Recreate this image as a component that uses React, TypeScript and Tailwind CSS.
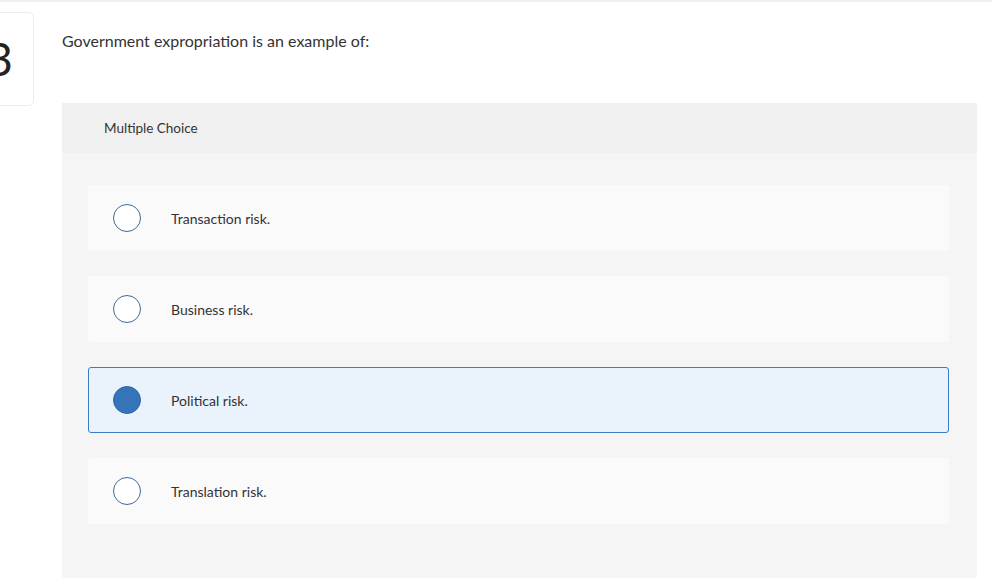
const options = [
  { label: "Transaction risk.", selected: false },
  { label: "Business risk.", selected: false },
  { label: "Political risk.", selected: true },
  { label: "Translation risk.", selected: false },
];

function Radio({ checked }: { checked: boolean }) {
  return (
    <span
      className={`block w-[28px] h-[28px] rounded-full border-[1.5px] ${
        checked ? "bg-[#3574b8] border-[#2e67a4]" : "bg-white border-[#3d6a98]"
      }`}
    />
  );
}

export default function App() {
  return (
    <div className="w-[992px] h-[588px] bg-white border-t-2 border-[#f0f0f0] overflow-hidden font-['Lato','Open_Sans',sans-serif] text-[#333]">
      <div className="flex">
        <div className="relative w-[34px] shrink-0 pt-[10px]">
          <div className="h-[94px] w-[60px] ml-[-26px] border border-[#ececec] rounded-[5px] flex items-center justify-end pr-[20px] overflow-hidden">
            <span className="text-[46px] leading-none text-[#222]">3</span>
          </div>
        </div>
        <div className="ml-[28px] w-[915px]">
          <p className="pt-[29px] text-[16px] leading-[20px]">Government expropriation is an example of:</p>
          <div className="mt-[52px] h-[475px] bg-[#f5f5f5] rounded-b-[3px]">
            <div className="h-[50px] bg-[#f0f0f0] flex items-center pl-[42px] pt-[1px] text-[13.5px]">
              Multiple Choice
            </div>
            <div className="flex flex-col gap-[25px] pt-[32px] pl-[26px] pr-[28px]">
              {options.map((o) => (
                <div
                  key={o.label}
                  className={`h-[66px] rounded-[3px] flex items-center ${
                    o.selected ? "bg-[#eaf2fb] border border-[#3b7cc5] pl-[24px]" : "bg-[#fafafa] pl-[25px]"
                  }`}
                >
                  <Radio checked={o.selected} />
                  <span className="ml-[30px] text-[14px]">{o.label}</span>
                </div>
              ))}
            </div>
          </div>
        </div>
      </div>
    </div>
  );
}
